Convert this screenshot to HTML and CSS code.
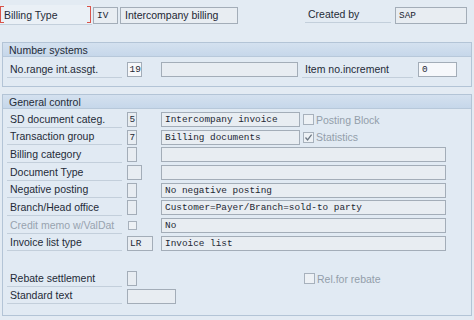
FILE: index.html
```html
<!DOCTYPE html>
<html lang="en">
<head>
  <meta charset="UTF-8">
  <title>Billing Type IV</title>
  <link rel="stylesheet" href="styles.css">
</head>
<body>
  <div class="top">
    <span class="req">Billing Type</span>
    <span class="fld disp mono iv">IV</span>
    <span class="fld disp ivtext">Intercompany billing</span>
    <span class="lbl created">Created by</span>
    <span class="fld disp mono sap">SAP</span>
  </div>

  <div class="group numbers">
    <div class="ghead">Number systems</div>
    <div class="row">
      <span class="lbl">No.range int.assgt.</span>
      <span class="cell"><span class="fld edit mono w15">19</span></span>
      <span class="fld disp w137"></span>
      <span class="lbl incr">Item no.increment</span>
      <span class="fld edit mono w39">0</span>
    </div>
  </div>

  <div class="group general">
    <div class="ghead">General control</div>
    <div class="row">
      <span class="lbl">SD document categ.</span>
      <span class="cell"><span class="fld disp mono w10">5</span></span>
      <span class="fld disp mono w139">Intercompany invoice</span>
      <span class="chk off"><span class="box"></span>Posting Block</span>
    </div>
    <div class="row">
      <span class="lbl">Transaction group</span>
      <span class="cell"><span class="fld disp mono w10">7</span></span>
      <span class="fld disp mono w139">Billing documents</span>
      <span class="chk off"><span class="box"><svg width="9" height="9" viewBox="0 0 9 9"><path d="M1.5 4.5 L3.6 7 L7.6 1.6" fill="none" stroke="#6d7884" stroke-width="1.3"/></svg></span>Statistics</span>
    </div>
    <div class="row">
      <span class="lbl">Billing category</span>
      <span class="cell"><span class="fld disp w10"></span></span>
      <span class="fld disp mono wide"></span>
    </div>
    <div class="row">
      <span class="lbl">Document Type</span>
      <span class="cell"><span class="fld disp w15"></span></span>
      <span class="fld disp mono wide"></span>
    </div>
    <div class="row">
      <span class="lbl">Negative posting</span>
      <span class="cell"><span class="fld disp w10"></span></span>
      <span class="fld disp mono wide">No negative posting</span>
    </div>
    <div class="row">
      <span class="lbl">Branch/Head office</span>
      <span class="cell"><span class="fld disp w10"></span></span>
      <span class="fld disp mono wide">Customer=Payer/Branch=sold-to party</span>
    </div>
    <div class="row">
      <span class="lbl grey">Credit memo w/ValDat</span>
      <span class="cell"><span class="box small"></span></span>
      <span class="fld disp mono wide">No</span>
    </div>
    <div class="row">
      <span class="lbl">Invoice list type</span>
      <span class="cell"><span class="fld disp mono w26">LR</span></span>
      <span class="fld disp mono wide">Invoice list</span>
    </div>
    <div class="row"></div>
    <div class="row">
      <span class="lbl">Rebate settlement</span>
      <span class="cell"><span class="fld disp w10"></span></span>
      <span class="chk off rebate"><span class="box"></span>Rel.for rebate</span>
    </div>
    <div class="row">
      <span class="lbl">Standard text</span>
      <span class="cell"><span class="fld disp w49"></span></span>
    </div>
  </div>
</body>
</html>
```

FILE: styles.css
```css
* {
  box-sizing: border-box;
}

body {
  margin: 0;
  width: 474px;
  height: 320px;
  overflow: hidden;
  background: #e3ebf3;
  font-family: "Liberation Sans", Arial, sans-serif;
  font-size: 10.5px;
  color: #1f2b38;
}

.mono {
  font-family: "Liberation Mono", "Courier New", monospace;
  font-size: 9.4px;
  color: #141a22;
}

/* header row */
.top {
  display: flex;
  align-items: center;
  height: 20px;
  margin-top: 5px;
}

.req {
  position: relative;
  flex: none;
  width: 92px;
  height: 20px;
  line-height: 20px;
  padding-left: 4px;
  background: #eaf0f6;
  border-bottom: 1px solid #c4d0dc;
}

.req::before,
.req::after {
  content: "";
  position: absolute;
  top: 1px;
  bottom: 1px;
  width: 3px;
  border: 1.5px solid #d9534a;
}

.req::before {
  left: 0;
  border-right: none;
}

.req::after {
  right: 1px;
  border-left: none;
}

.fld {
  display: inline-flex;
  flex: none;
  align-items: center;
  height: 15px;
  padding-left: 3px;
  border: 1px solid #a3adb8;
  white-space: nowrap;
  overflow: hidden;
  color: #1d2733;
}

.disp {
  background: #e8edf2;
}

.edit {
  background: #f6f8fb;
}

/* group boxes */
.group {
  margin: 0 2px;
  border: 1px solid #b3c4d6;
  background: #e1eaf3;
}

.numbers {
  margin-top: 17px;
  padding-bottom: 7px;
}

.general {
  margin-top: 7px;
  padding-bottom: 10px;
}

.ghead {
  height: 14px;
  line-height: 14px;
  padding-left: 6px;
  background: linear-gradient(#d4e1ef, #c6d7ea);
  border-bottom: 1px solid #b7c8da;
}

.numbers .ghead {
  margin-bottom: 4px;
}

.general .ghead {
  margin-bottom: 2px;
}

.row {
  display: flex;
  align-items: center;
  height: 17.7px;
  padding-left: 4px;
}

.lbl {
  flex: none;
  width: 115px;
  height: 16px;
  line-height: 15px;
  padding-left: 3px;
  border-bottom: 1px solid #c3cfdb;
  white-space: nowrap;
}

.grey {
  color: #98a3af;
}

.cell {
  display: flex;
  flex: none;
  align-items: center;
  width: 39px;
  padding-left: 5px;
}

.w10 { width: 10px; padding-left: 1.5px; }
.w15 { width: 15px; padding-left: 1.5px; }
.w26 { width: 26px; padding-left: 2px; }
.w39 { width: 39px; }
.w49 { width: 49px; }
.w137 { width: 137px; }
.w139 { width: 139px; }
.wide { width: 285px; }

.top .iv {
  width: 25px;
  height: 17px;
  margin-left: 1px;
  padding-left: 3px;
}

.top .ivtext {
  width: 118px;
  height: 17px;
  margin-left: 2px;
  padding-left: 4px;
}

.top .created {
  width: 86px;
  margin-left: 67px;
}

.top .sap {
  width: 72px;
  height: 17px;
  margin-left: 4px;
}

.row .incr {
  width: 111px;
  margin-left: 4px;
}

.numbers .w39 {
  margin-left: 5px;
}

/* checkboxes */
.chk {
  display: flex;
  align-items: center;
  margin-left: 3px;
}

.off {
  color: #939eaa;
}

.box {
  display: inline-flex;
  flex: none;
  align-items: center;
  justify-content: center;
  width: 11px;
  height: 11px;
  margin-right: 2px;
  border: 1px solid #a7b1bc;
  background: #edf1f5;
}

.box.small {
  width: 9px;
  height: 9px;
  margin-left: 1px;
}

.rebate {
  margin-left: 143px;
}
```
